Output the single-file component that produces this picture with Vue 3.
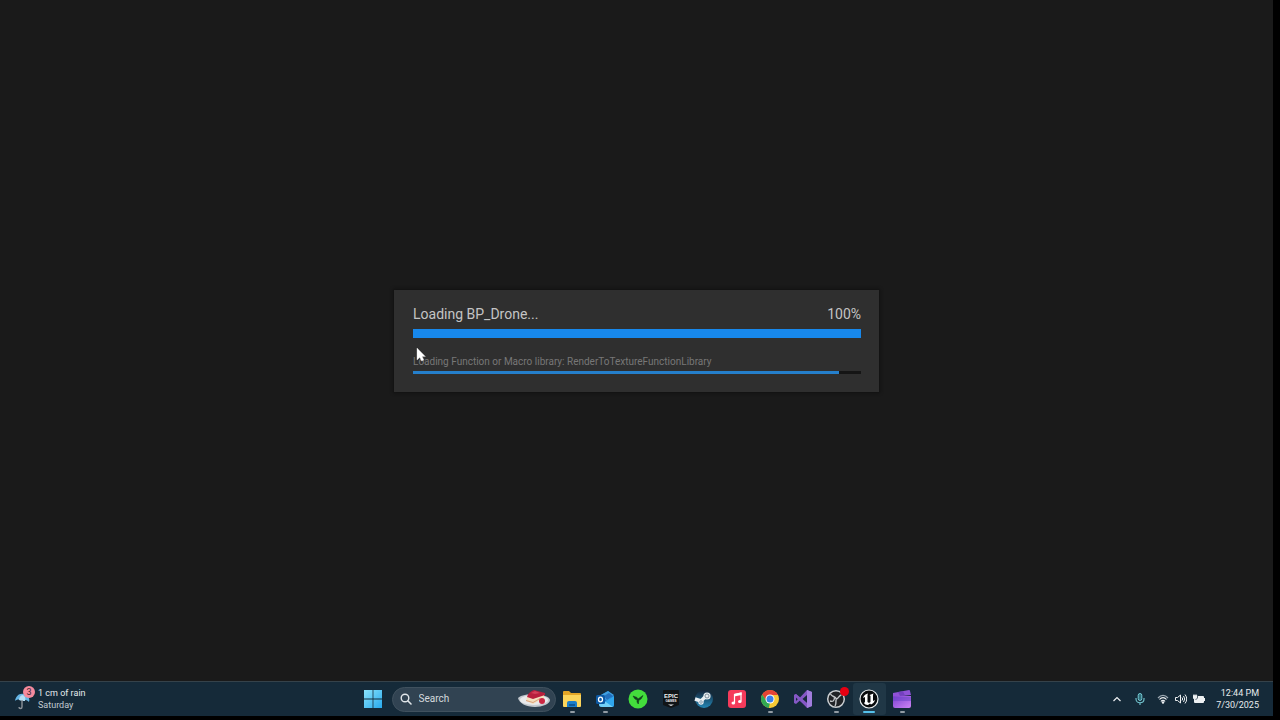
<template>
  <div class="screen">
    <main class="desktop">
      <section class="dialog">
        <div class="dialog__head">
          <span>{{ task.title }}</span>
          <span>{{ task.percent }}%</span>
        </div>
        <div class="bar">
          <div class="bar__fill" :style="{ width: task.percent + '%' }"></div>
        </div>
        <p class="dialog__step">{{ task.step }}</p>
        <div class="bar bar--thin">
          <div class="bar__fill" :style="{ width: task.stepPercent + '%' }"></div>
        </div>
        <svg class="cursor" viewBox="0 0 10 15">
          <path d="M1 1V13L3.8 10.4L5.6 14L7.8 13L6.2 9.6H9.4Z" fill="#fff" stroke="#ddd" stroke-width=".4" />
        </svg>
      </section>
    </main>

    <footer class="taskbar">
      <button class="weather">
        <svg class="weather__icon" viewBox="0 0 22 24">
          <path d="M1 14C2 8 7 5 12 8C15 10 16 12 15 15C12 12 10 13 8 14C6 12 3 12 1 14Z" fill="#65b5e5" />
          <path d="M5 13C5 10 7 8 9 8C11 9 12 11 11 14L8 14Z" fill="#b5dff5" />
          <path d="M8 13V20C8 22 5 22 5 20" fill="none" stroke="#8c9299" stroke-width="1.4" />
          <circle cx="15" cy="5" r="6" fill="#f58a9d" />
          <text x="15" y="8" text-anchor="middle" font-size="9" fill="#3a2530">3</text>
        </svg>
        <span class="weather__text">
          <span>1 cm of rain</span>
          <span class="weather__day">Saturday</span>
        </span>
      </button>

      <nav class="apps">
        <button class="app" aria-label="Start">
          <svg class="app__icon" viewBox="0 0 20 20">
            <defs>
              <linearGradient id="start" x1="0" y1="0" x2="1" y2="1">
                <stop offset="0" stop-color="#8be3fb" />
                <stop offset="1" stop-color="#27a9ec" />
              </linearGradient>
            </defs>
            <path d="M1 1H9.6V9.6H1ZM10.4 1H19V9.6H10.4ZM1 10.4H9.6V19H1ZM10.4 10.4H19V19H10.4Z" fill="url(#start)" />
          </svg>
        </button>

        <label class="search">
          <svg class="search__glass" viewBox="0 0 12 12">
            <circle cx="5" cy="5" r="3.8" fill="none" stroke="#e0e5e9" stroke-width="1.4" />
            <path d="M8 8L11 11" stroke="#e0e5e9" stroke-width="1.6" stroke-linecap="round" />
          </svg>
          <input class="search__input" type="text" placeholder="Search" aria-label="Search" />
          <svg class="search__cake" viewBox="0 0 32 20">
            <path d="M0 9C3 6 10 5 16 5C24 5 32 8 32 11C32 15 24 18 17 18C8 18 1 14 0 9Z" fill="#c3c8ce" />
            <ellipse cx="16" cy="11" rx="14" ry="5" fill="#e8e9eb" />
            <path d="M9 8L15 9L26 5V9L15 15L8 12Z" fill="#f5dfbd" />
            <path d="M8 11L15 13L22 9V10L15 14L8 12Z" fill="#d9a07c" />
            <path d="M9 8C10 4 13 2 16 1L27 4V6L15 10Z" fill="#b81f3d" />
            <path d="M13 4L17 2L22 4L17 5Z" fill="#d2405a" />
            <circle cx="24" cy="12" r="3" fill="#cc2743" />
          </svg>
        </label>

        <button class="app app--running" aria-label="File Explorer">
          <svg class="app__icon" viewBox="0 0 20 20">
            <path d="M1 3Q1 2 2 2H7L9 4H18Q19 4 19 5V17H1Z" fill="#e3a526" />
            <path d="M1 6H19V17Q19 18 18 18H2Q1 18 1 17Z" fill="#fbd45b" />
            <path d="M5 18V14Q5 12 7 12H13Q15 12 15 14V18Z" fill="#1a7dc9" />
            <path d="M7 15H13V17H7Z" fill="#0f5796" />
          </svg>
        </button>
        <button class="app app--running" aria-label="Outlook">
          <svg class="app__icon" viewBox="0 0 20 20">
            <path d="M4 7L13 2L19 7V16Q19 18 17 18H7Q4 18 4 16Z" fill="#1673c8" />
            <path d="M6 6L13 2L19 6L12 12Z" fill="#3f9fe0" />
            <path d="M9 7L14 4L18 7L12 11Z" fill="#2370bd" />
            <path d="M19 7V16Q19 18 17 18H8L5 16Z" fill="#2fa6ed" />
            <path d="M8 11L18 18H7Q4 18 4 15Z" fill="#71d0f7" />
            <rect x="1" y="6" width="9" height="9" rx="1.5" fill="#0c59a4" />
            <ellipse cx="5.5" cy="10.5" rx="2" ry="2.3" fill="none" stroke="#fff" stroke-width="1.3" />
          </svg>
        </button>
        <button class="app" aria-label="Razer Cortex">
          <svg class="app__icon" viewBox="0 0 20 20">
            <circle cx="10" cy="10" r="9.5" fill="#43dd3c" />
            <path d="M5 7L9 8.5L10 10L15 6.5L13 10L10.8 11.2L10.3 15L9 13L9.2 11L7 10Z" fill="#123f1e" stroke="#123f1e" stroke-width=".6" stroke-linejoin="round" />
          </svg>
        </button>
        <button class="app" aria-label="Epic Games">
          <svg class="app__icon" viewBox="0 0 20 20">
            <path d="M3 1H17Q18 1 18 2V16L10 19L2 16V2Q2 1 3 1Z" fill="#101416" />
            <text x="10" y="9" text-anchor="middle" class="epic">EPIC</text>
            <text x="10" y="13" text-anchor="middle" class="epic epic--small">GAMES</text>
            <path d="M7 15.5H13L10 17Z" fill="#e8ebed" />
          </svg>
        </button>
        <button class="app" aria-label="Steam">
          <svg class="app__icon" viewBox="0 0 20 20">
            <defs>
              <linearGradient id="steam" x1="0" y1="0" x2="0" y2="1">
                <stop offset="0" stop-color="#142338" />
                <stop offset="1" stop-color="#2487b5" />
              </linearGradient>
            </defs>
            <circle cx="10" cy="10" r="9" fill="url(#steam)" />
            <path d="M1 10L7 12L11 8" fill="none" stroke="#e9eef2" stroke-width="3.5" />
            <circle cx="13" cy="7" r="3.6" fill="#e9eef2" />
            <circle cx="13" cy="7" r="2" fill="#e9eef2" stroke="#53677a" stroke-width=".7" />
            <circle cx="7" cy="13" r="2.7" fill="#e9eef2" />
            <circle cx="7" cy="13" r="1.3" fill="none" stroke="#53738b" stroke-width=".6" />
          </svg>
        </button>
        <button class="app" aria-label="Apple Music">
          <svg class="app__icon" viewBox="0 0 20 20">
            <rect x="1" y="1" width="18" height="18" rx="3" fill="#f53b5b" />
            <path d="M7.5 14V5.5L14 4V12" fill="none" stroke="#fff" stroke-width="1.2" />
            <path d="M7 5L14.6 3.5V6L7 7.5Z" fill="#fff" />
            <ellipse cx="6.3" cy="14" rx="1.8" ry="1.5" fill="#fff" />
            <ellipse cx="12.8" cy="12.5" rx="1.8" ry="1.5" fill="#fff" />
          </svg>
        </button>
        <button class="app app--running" aria-label="Chrome">
          <svg class="app__icon" viewBox="0 0 20 20">
            <circle cx="10" cy="10" r="9" fill="#f6c934" />
            <path d="M2.2 5.5A9 9 0 0 1 17.8 5.5L18 6H10L6 12Z" fill="#e44435" />
            <path d="M2.2 5.5L6.5 12L10 14L9.5 19A9 9 0 0 1 2.2 5.5Z" fill="#32a852" />
            <path d="M10 14L14 11L10 19H9Z" fill="#f6c934" />
            <circle cx="10" cy="10" r="4.5" fill="#fff" />
            <circle cx="10" cy="10" r="3.5" fill="#397fe8" />
          </svg>
        </button>
        <button class="app" aria-label="Visual Studio">
          <svg class="app__icon" viewBox="0 0 20 20">
            <path d="M1 6L3 5L15 15V19L1 7Z" fill="#7549b5" />
            <path d="M1 6L3 5L7 8.5L14 1L19 3V17L14 19L7 11.5L3 15L1 14ZM3 8V12L5 10ZM14 6L9.5 10L14 14Z" fill="#8458c4" fill-rule="evenodd" />
            <path d="M14 1L19 3V17L14 19Z" fill="#a17ddd" />
          </svg>
        </button>
        <button class="app app--running" aria-label="OBS Studio">
          <svg class="app__icon" viewBox="0 0 20 20">
            <circle cx="10" cy="10" r="8.3" fill="#202326" stroke="#c9cdd0" stroke-width="1.5" />
            <path d="M4.5 5C6 8 9 7 10.5 10M15.5 6C13 6 13 9 10.5 10M10.5 10C9 12 11 14 9 17M4 12C7 13 8 12 8.5 9" fill="none" stroke="#c3c7ca" stroke-width="1.4" />
          </svg>
          <span class="app__badge"></span>
        </button>
        <button class="app app--running app--active" aria-label="Unreal Editor">
          <svg class="app__icon" viewBox="0 0 20 20">
            <circle cx="10" cy="10" r="9" fill="#080a0c" stroke="#e8ebed" stroke-width="1.2" />
            <path d="M4 9C5 6 7 5 9 4.5L8.5 6V13L10 14L11.5 13V7L10.5 6L14.5 4.5L14 6V12L16 11C15 14 13 15 12 15.5L11 14.5L9 16C7 16 5.5 15 5 14L6 13V8Z" fill="#fff" />
          </svg>
        </button>
        <button class="app app--running" aria-label="Clipchamp">
          <svg class="app__icon" viewBox="0 0 20 20">
            <defs>
              <linearGradient id="clip" x1="0" y1="0" x2="1" y2="1">
                <stop offset="0" stop-color="#7b42cf" />
                <stop offset="1" stop-color="#ce83f5" />
              </linearGradient>
            </defs>
            <path d="M1 4L17 1Q18 1 18 2L19 6L1 8Z" fill="#8f52d6" />
            <path d="M6 3L8 7L13 6.5L11 2.2Z" fill="#7440bf" />
            <path d="M1 7H19V17Q19 19 17 19H3Q1 19 1 17Z" fill="url(#clip)" />
            <path d="M1 8H19V12H1Z" fill="#6741c5" opacity=".5" />
          </svg>
        </button>
      </nav>

      <div class="tray">
        <button class="tray__button" aria-label="Show hidden icons">
          <svg class="tray__icon" viewBox="0 0 12 12">
            <path d="M2.5 8L6 4.5L9.5 8" fill="none" stroke="#edf0f2" stroke-width="1.2" />
          </svg>
        </button>
        <button class="tray__button" aria-label="Microphone">
          <svg class="tray__icon" viewBox="0 0 12 12">
            <rect x="4.2" y=".5" width="3.6" height="7" rx="1.8" fill="#306f7b" stroke="#75c8d2" />
            <path d="M2 5V6C2 11 10 11 10 6V5M6 10V12" fill="none" stroke="#75c8d2" stroke-width="1.1" />
          </svg>
        </button>
        <button class="tray__button tray__button--group" aria-label="Network, volume and battery">
          <svg class="tray__icon" viewBox="0 0 12 12">
            <path d="M1 5C4 1.5 8 1.5 11 5" fill="none" stroke="#9da9b2" stroke-width="1.2" />
            <path d="M2.5 6.5C4.5 4 7.5 4 9.5 6.5M4 8.5C5 7 7 7 8 8.5" fill="none" stroke="#edf0f2" stroke-width="1.2" />
            <circle cx="6" cy="9.5" r="1.2" fill="#edf0f2" />
          </svg>
          <svg class="tray__icon" viewBox="0 0 12 12">
            <path d="M.5 4.5H2.5L5.5 2V10L2.5 7.5H.5Z" fill="none" stroke="#edf0f2" />
            <path d="M7 4.5Q8.5 6 7 7.5M8.5 3Q11 6 8.5 9M10 1.5Q13.5 6 10 10.5" fill="none" stroke="#edf0f2" />
          </svg>
          <svg class="tray__icon" viewBox="0 0 12 12">
            <path d="M3 3H10Q11 3 11 4V9Q11 10 10 10H2Q1 10 1 9V6H3Z" fill="#edf0f2" />
            <path d="M11 5H12V8H11Z" fill="#edf0f2" />
            <path d="M0 2.5H4V5L2 6.5L0 5ZM1 1V3M3 1V3" fill="#edf0f2" stroke="#edf0f2" stroke-width=".7" />
            <path d="M4.5 3V5L2.5 7" fill="none" stroke="#152a39" stroke-width=".7" />
          </svg>
        </button>
        <button class="clock">
          <span>12:44 PM</span>
          <span>7/30/2025</span>
        </button>
      </div>
    </footer>
  </div>
</template>

<script setup>
import { reactive } from "vue";

const task = reactive({
  title: "Loading BP_Drone...",
  percent: 100,
  step: "Loading Function or Macro library: RenderToTextureFunctionLibrary",
  stepPercent: 95,
});
</script>

<style>
body {
  margin: 0;
  background: #000;
}
</style>

<style scoped>
.screen {
  display: flex;
  flex-direction: column;
  box-sizing: border-box;
  min-height: 100vh;
  padding: 0 7px 4px 0;
  background: #000;
  font-family: Roboto, "Open Sans", sans-serif;
}
button {
  padding: 0;
  border: 0;
  background: none;
  color: inherit;
  font: inherit;
}
.desktop {
  display: flex;
  flex: 1;
  align-items: center;
  justify-content: center;
  background: #1a1a1a;
}
.dialog {
  position: relative;
  box-sizing: border-box;
  width: 485px;
  max-width: 100%;
  padding: 16px 18px 18px 19px;
  background: #2f2f2f;
  box-shadow: 0 0 3px 1px #111;
}
.dialog__head {
  display: flex;
  justify-content: space-between;
  margin-bottom: 6px;
  font-size: 14px;
  line-height: 17px;
  color: #c4c4c4;
}
.dialog__step {
  margin: 17px 0 2px;
  font-size: 10px;
  line-height: 14px;
  color: #777;
}
.bar {
  height: 9px;
  background: #151515;
}
.bar--thin {
  height: 3px;
}
.bar__fill {
  height: 100%;
  background: #1788ec;
}
.bar--thin .bar__fill {
  background: #257fcb;
}
.cursor {
  position: absolute;
  top: 57px;
  left: 22px;
  width: 10px;
  height: 15px;
}
.taskbar {
  display: grid;
  grid-template-columns: 1fr auto 1fr;
  align-items: center;
  box-sizing: border-box;
  height: 35px;
  border-top: 1px solid #35424a;
  background: #152a39;
  color: #e6eaed;
  font-size: 9px;
  line-height: 12px;
}
.weather {
  display: flex;
  align-items: center;
  justify-self: start;
  gap: 2px;
  padding-left: 14px;
  text-align: left;
}
.weather__icon {
  width: 22px;
  height: 24px;
  overflow: visible;
}
.weather__text {
  display: flex;
  flex-direction: column;
}
.weather__day {
  color: #c3cbd1;
}
.apps {
  display: flex;
  align-items: center;
  padding-left: 2px;
}
.app {
  position: relative;
  display: flex;
  align-items: center;
  justify-content: center;
  width: 33px;
  height: 32px;
}
.app__icon {
  width: 20px;
  height: 20px;
}
.app--running::after {
  position: absolute;
  bottom: 2px;
  width: 5px;
  height: 2px;
  border-radius: 1px;
  background: #929ca4;
  content: "";
}
.app--active {
  border-radius: 3px;
  background: #203746;
}
.app--active::after {
  width: 12px;
  background: #55c0ea;
}
.app__badge {
  position: absolute;
  top: 4px;
  right: 4px;
  width: 9px;
  height: 9px;
  border-radius: 50%;
  background: #e60012;
}
.epic {
  fill: #f0f2f3;
  font-family: "Liberation Sans", sans-serif;
  font-size: 6px;
  font-weight: 700;
}
.epic--small {
  font-size: 3px;
}
.search {
  display: flex;
  align-items: center;
  gap: 7px;
  box-sizing: border-box;
  width: 164px;
  height: 25px;
  margin-left: 2px;
  padding: 0 5px 0 7px;
  border: 1px solid #40515e;
  border-radius: 13px;
  background: #314352;
}
.search__glass {
  width: 12px;
  height: 12px;
}
.search__input {
  flex: 1;
  min-width: 0;
  padding: 0;
  border: 0;
  outline: 0;
  background: none;
  color: #d5dade;
  font: inherit;
  font-size: 10px;
}
.search__input::placeholder {
  color: #d5dade;
  opacity: 1;
}
.search__cake {
  width: 32px;
  height: 20px;
}
.tray {
  display: flex;
  align-items: center;
  justify-self: end;
  gap: 11px;
  padding-right: 14px;
}
.tray__button {
  display: flex;
}
.tray__button--group {
  gap: 6px;
}
.tray__icon {
  width: 12px;
  height: 12px;
}
.clock {
  display: flex;
  flex-direction: column;
  text-align: right;
}
</style>
